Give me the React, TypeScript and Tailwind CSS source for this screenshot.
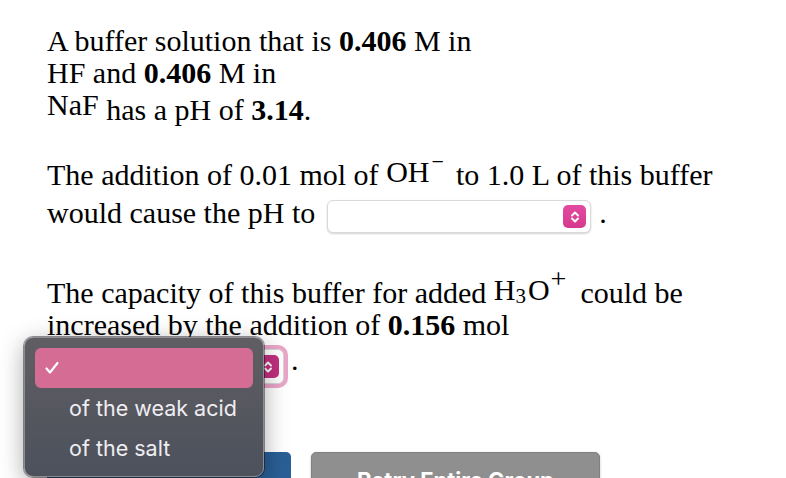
import React from "react";

const serif = { fontFamily: '"Liberation Serif", "Times New Roman", serif' };
const sans = { fontFamily: 'Inter, "Noto Sans", sans-serif' };

function Chevrons({ className }: { className?: string }) {
  return (
    <svg viewBox="0 0 24 24" className={className} fill="none" stroke="white" strokeWidth={2.6} strokeLinecap="round" strokeLinejoin="round">
      <path d="M8 10 L12 6 L16 10" />
      <path d="M8 14 L12 18 L16 14" />
    </svg>
  );
}

function SelectBox({ width, focused }: { width: number; focused?: boolean }) {
  return (
    <span
      className={
        "relative flex shrink-0 items-center justify-end rounded-[6px] bg-white " +
        (focused
          ? "h-[35px] border border-[#d6d6d6] ring-[4px] ring-[#eaa6c9]"
          : "h-[33px] border border-[#d9d9d9] shadow-[0_1px_2px_rgba(0,0,0,0.18)]")
      }
      style={{ width }}
    >
      <span
        className={
          "mr-[4px] flex h-[23px] w-[23px] items-center justify-center rounded-[5px] " +
          (focused ? "bg-[#c2307f]" : "bg-gradient-to-b from-[#e24aa0] to-[#d63a8e]")
        }
      >
        <Chevrons className="h-[18px] w-[18px]" />
      </span>
    </span>
  );
}

export default function App() {
  return (
    <div className="relative h-[478px] w-[786px] overflow-hidden bg-white text-black">
      <div className="pl-[47px] pt-[25px] text-[30px]" style={serif}>
        {/* first paragraph */}
        <div className="h-[32px] leading-[32px] whitespace-nowrap">
          A buffer solution that is <b>0.406</b> M in
        </div>
        <div className="h-[32px] leading-[32px] whitespace-nowrap">
          HF and <b>0.406</b> M in
        </div>
        <div className="mt-[5px] h-[32px] leading-[32px] whitespace-nowrap">
          <span className="relative top-[-5px]">NaF</span> has a pH of <b>3.14</b>.
        </div>

        {/* second paragraph */}
        <div className="mt-[33px] h-[32px] leading-[32px] whitespace-nowrap">
          The addition of 0.01 mol of{" "}
          <span className="relative top-[-3px]">
            OH<span className="relative top-[-13px] ml-[2px] text-[22px]">−</span>
          </span>
          <span className="ml-[12px]">to 1.0 L of this buffer</span>
        </div>
        <div className="mt-[6px] flex h-[40px] items-start whitespace-nowrap">
          <span className="leading-[32px]">would cause the pH to</span>
          <span className="ml-[12px] mt-[3px]">
            <SelectBox width={264} />
          </span>
          <span className="ml-[8px] leading-[32px]">.</span>
        </div>

        {/* third paragraph */}
        <div className="mt-[40px] h-[32px] leading-[32px] whitespace-nowrap">
          The capacity of this buffer for added{" "}
          <span className="relative top-[-3px]">
            H<span className="relative top-[3px] text-[21px]">3</span>
            <span className="ml-[2px]">O</span>
            <span className="relative top-[-12px] ml-[1px] text-[28px]">+</span>
          </span>
          <span className="ml-[14px]">could be</span>
        </div>
        <div className="h-[32px] leading-[32px] whitespace-nowrap">
          increased by the addition of <b>0.156</b> mol
        </div>
        <div className="mt-[8px] flex h-[35px] items-start">
          <SelectBox width={237} focused />
          <span className="ml-[7px] mt-[-5px] leading-[32px]">.</span>
        </div>

        {/* action buttons */}
        <div className="mt-[68px] flex gap-[20px]" style={sans}>
          <div className="h-[40px] w-[244px] rounded-[5px] bg-[#2a5f96]" />
          <div className="flex h-[40px] w-[289px] justify-center rounded-[5px] border border-[#808080] bg-[#8f8f8f] pt-[16px] text-[22px] font-bold leading-none text-white shadow-[0_1px_3px_rgba(0,0,0,0.2)]">
            Retry Entire Group
          </div>
        </div>
      </div>

      {/* open option list */}
      <div
        className="absolute left-[24px] top-[337px] h-[140px] w-[240px] rounded-[9px] border border-[#8d8c90] bg-gradient-to-b from-[#605e63] to-[#4c515c] p-[10px] shadow-[0_6px_24px_rgba(0,0,0,0.35)] ring-1 ring-black/40"
        style={sans}
      >
        <div className="flex h-[40px] items-center rounded-[6px] bg-[#d46c93] pl-[9px]">
          <svg viewBox="0 0 16 16" className="h-[16px] w-[16px]" fill="none" stroke="white" strokeWidth={2.2} strokeLinecap="round" strokeLinejoin="round">
            <path d="M2.5 8.5 L6 12.5 L13.5 3" />
          </svg>
        </div>
        <div className="flex h-[40px] items-center pl-[34px] text-[21.5px] text-[#efedf1]">of the weak acid</div>
        <div className="flex h-[40px] items-center pl-[34px] text-[21.5px] text-[#efedf1]">of the salt</div>
      </div>
    </div>
  );
}
